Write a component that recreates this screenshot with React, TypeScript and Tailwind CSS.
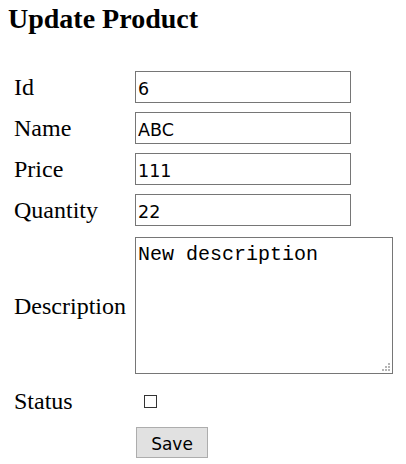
import React from "react";

const serif = { fontFamily: '"Liberation Serif", "Times New Roman", serif' };

function Row({ label, children, className = "" }: { label: string; children: React.ReactNode; className?: string }) {
  return (
    <div className={`flex items-center ${className}`}>
      <div className="w-[135px] shrink-0 whitespace-nowrap pl-[14px] text-[24px] leading-[28px] text-black" style={serif}>
        {label}
      </div>
      {children}
    </div>
  );
}

const inputCls =
  "block h-[32px] w-[216px] border border-[#767676] bg-white px-[2px] pt-[3px] pb-0 text-[17.5px] leading-normal text-black outline-none font-['DejaVu_Sans',sans-serif]";

export default function App() {
  return (
    <div className="min-h-[464px] w-[406px] bg-white">
      <h3 className="pl-[8px] pt-[3px] text-[28px] font-bold leading-[32px] text-black" style={serif}>
        Update Product
      </h3>
      <div className="mt-[36px] flex flex-col">
        <Row label="Id">
          <input className={inputCls} defaultValue="6" readOnly />
        </Row>
        <Row label="Name" className="mt-[9px]">
          <input className={inputCls} defaultValue="ABC" readOnly />
        </Row>
        <Row label="Price" className="mt-[9px]">
          <input className={inputCls} defaultValue="111" readOnly />
        </Row>
        <Row label="Quantity" className="mt-[9px]">
          <input className={inputCls} defaultValue="22" readOnly />
        </Row>
        <Row label="Description" className="mt-[11px]">
          <div className="relative">
            <textarea
              className="block h-[137px] w-[258px] resize-none border border-[#767676] bg-white p-[2px] text-[20px] leading-normal text-black outline-none font-['Liberation_Mono',monospace]"
              defaultValue="New description"
              readOnly
            />
            <svg className="pointer-events-none absolute bottom-[2px] right-[2px]" width="10" height="10" viewBox="0 0 10 10">
              <rect x="7" y="1" width="2" height="2" fill="#b5b5b5" />
              <rect x="4" y="4" width="2" height="2" fill="#b5b5b5" />
              <rect x="7" y="4" width="2" height="2" fill="#b5b5b5" />
              <rect x="1" y="7" width="2" height="2" fill="#b5b5b5" />
              <rect x="4" y="7" width="2" height="2" fill="#b5b5b5" />
              <rect x="7" y="7" width="2" height="2" fill="#b5b5b5" />
            </svg>
          </div>
        </Row>
        <Row label="Status" className="mt-[13px] h-[28px]">
          <input
            type="checkbox"
            className="ml-[9px] block h-[13px] w-[13px] appearance-none border border-[#333333] bg-white"
          />
        </Row>
        <div className="mt-[12px] pl-[136px]">
          <button className="block h-[31px] w-[72px] border border-[#adadad] bg-[#e1e1e1] pt-[3px] text-[17px] leading-none text-black font-['DejaVu_Sans',sans-serif]">
            Save
          </button>
        </div>
      </div>
    </div>
  );
}
